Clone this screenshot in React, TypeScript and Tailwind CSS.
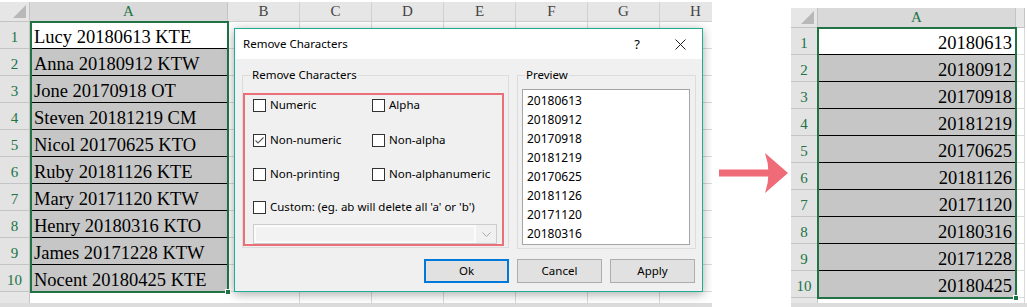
import React from 'react';

const sourceRows = [
    'Lucy 20180613 KTE',
    'Anna 20180912 KTW',
    'Jone 20170918 OT',
    'Steven 20181219 CM',
    'Nicol 20170625 KTO',
    'Ruby 20181126 KTE',
    'Mary 20171120 KTW',
    'Henry 20180316 KTO',
    'James 20171228 KTW',
    'Nocent 20180425 KTE',
];
const results = sourceRows.map(r => r.split(' ')[1]);
const otherCols = ['B', 'C', 'D', 'E', 'F', 'G', 'H'];

const serif = "font-['Liberation_Serif','Times_New_Roman',serif]";

function Corner({ width }: { width: string }) {
    return (
        <div className={`${width} h-[20px] shrink-0 bg-[#e6e6e6] border-r border-b border-[#c4c4c4] flex items-end justify-end pr-[3px] pb-[3px]`}>
            <svg width="13" height="13" viewBox="0 0 13 13">
                <polygon points="13,0 13,13 0,13" fill="#b8b8b8" />
            </svg>
        </div>
    );
}

function Check({ label, checked }: { label: string; checked?: boolean }) {
    return (
        <div className="flex items-center h-[20px] whitespace-nowrap">
            <span className="w-[13px] h-[13px] shrink-0 border border-[#333333] bg-white flex items-center justify-center">
                {checked && (
                    <svg width="11" height="11" viewBox="0 0 11 11">
                        <path d="M1.5 5.5 L4 8 L9.5 2.5" fill="none" stroke="#5a5a5a" strokeWidth="1.1" />
                    </svg>
                )}
            </span>
            <span className="ml-[4px]">{label}</span>
        </div>
    );
}

function RemoveDialog() {
    return (
        <div className="absolute left-[234px] top-[28px] w-[469px] h-[264px] border border-[#1fae94] bg-[#f0f0f0] shadow-[0_2px_10px_rgba(0,0,0,0.35)] font-['Noto_Sans',sans-serif] text-[11.5px] leading-[16px] text-black flex flex-col">
            {/* Title bar */}
            <div className="h-[30px] bg-white flex items-center pl-[8px]">
                <span>Remove Characters</span>
                <span className="ml-auto text-[13px]">?</span>
                <svg className="ml-[35px] mr-[16px]" width="11" height="11" viewBox="0 0 11 11">
                    <path d="M0.5 0.5 L10.5 10.5 M10.5 0.5 L0.5 10.5" stroke="#222" strokeWidth="1" />
                </svg>
            </div>

            <div className="pl-[7px] pr-[6px] pt-[8px]">
                <div className="flex items-start gap-[8px]">
                    {/* Remove Characters group */}
                    <fieldset className="w-[267px] border border-[#dcdcdc] pb-[1px]">
                        <legend className="ml-[8px] px-[1px] leading-[16px]">Remove Characters</legend>
                        <div className="mt-[10px] mr-[4px] border-2 border-[#e96f79] pl-[8px] pr-[5px]">
                            <div className="flex">
                                <div className="w-[119px]"><Check label="Numeric" /></div>
                                <Check label="Alpha" />
                            </div>
                            <div className="flex mt-[15px]">
                                <div className="w-[119px]"><Check label="Non-numeric" checked /></div>
                                <Check label="Non-alpha" />
                            </div>
                            <div className="flex mt-[14px]">
                                <div className="w-[119px]"><Check label="Non-printing" /></div>
                                <Check label="Non-alphanumeric" />
                            </div>
                            <div className="mt-[13px]">
                                <Check label="Custom: (eg. ab will delete all 'a' or 'b')" />
                            </div>
                            <div className="mt-[7px] h-[20px] border border-[#cccccc] flex bg-[#f0f0f0]">
                                <div className="flex-1 border-2 border-[#fbfbfb] bg-[#f2f2f2]" />
                                <div className="w-[20px] flex items-center justify-center">
                                    <svg width="9" height="5" viewBox="0 0 9 5">
                                        <path d="M0.5 0.5 L4.5 4.5 L8.5 0.5" fill="none" stroke="#a8a8a8" strokeWidth="1" />
                                    </svg>
                                </div>
                            </div>
                        </div>
                    </fieldset>

                    {/* Preview group */}
                    <fieldset className="w-[179px] border border-[#dcdcdc] pb-[3px]">
                        <legend className="ml-[7px] px-[1px] leading-[16px]">Preview</legend>
                        <div className="mt-[6px] ml-[4px] mr-[5px] h-[156px] border border-[#a5a5a5] bg-white pl-[4px] pt-[1px] text-[12px] leading-[19px] overflow-hidden">
                            {results.slice(0, 8).map(v => (
                                <div key={v}>{v}</div>
                            ))}
                        </div>
                    </fieldset>
                </div>

                <div className="flex justify-end gap-[8px] mt-[10px] pr-[1px]">
                    <button className="w-[85px] h-[24px] border-2 border-[#0078d7] bg-[#e1e1e1]">Ok</button>
                    <button className="w-[85px] h-[24px] border border-[#adadad] bg-[#e1e1e1]">Cancel</button>
                    <button className="w-[85px] h-[24px] border border-[#adadad] bg-[#e1e1e1]">Apply</button>
                </div>
            </div>
        </div>
    );
}

function LeftSheet() {
    return (
        <div className={`relative w-[712px] h-[307px] shrink-0 overflow-hidden bg-white ${serif}`}>
            <div className="h-[2px]" />
            {/* Column headers */}
            <div className="flex">
                <Corner width="w-[30px]" />
                <div className="w-[198px] h-[20px] shrink-0 bg-[#d9d9d9] border-r border-b border-[#c4c4c4] flex items-center justify-center text-[15px] text-[#217346]">A</div>
                {otherCols.map(c => (
                    <div key={c} className="w-[72px] h-[20px] shrink-0 bg-[#e6e6e6] border-r border-b border-[#d0d0d0] flex items-center justify-center text-[15px] text-[#444]">{c}</div>
                ))}
            </div>
            {/* Rows */}
            {sourceRows.map((text, i) => (
                <div key={text} className="flex h-[27px]">
                    <div className="w-[30px] shrink-0 bg-[#e3e3e3] border-r border-b border-[#c4c4c4] flex items-end justify-center pb-[3px] text-[15px] leading-none text-[#217346]">{i + 1}</div>
                    <div className={`w-[198px] shrink-0 border-b border-black flex items-end pl-[4px] pb-[2px] text-[18.5px] leading-none whitespace-nowrap ${i === 0 ? 'bg-white' : 'bg-[#c6c6c6]'}`}>{text}</div>
                    {otherCols.map(c => (
                        <div key={c} className="w-[72px] shrink-0 border-r border-b border-[#d9d9d9]" />
                    ))}
                </div>
            ))}
            <div className="flex h-[11px] overflow-hidden">
                <div className="w-[30px] shrink-0 bg-[#e6e6e6] border-r border-[#c4c4c4]" />
                <div className="w-[198px] shrink-0" />
                {otherCols.map(c => (
                    <div key={c} className="w-[72px] shrink-0 border-r border-[#d9d9d9]" />
                ))}
            </div>
            <div className="h-[4px] bg-[#dcdcdc]" />

            {/* Selection */}
            <div className="absolute left-[30px] top-[21px] w-[199px] h-[272px] border-2 border-[#217346]" />
            <div className="absolute left-[225px] top-[289px] w-[6px] h-[6px] bg-[#217346] border border-white" />

            <RemoveDialog />
        </div>
    );
}

function RightSheet() {
    return (
        <div className={`relative w-[236px] h-[307px] shrink-0 overflow-hidden bg-white pt-[8px] ${serif}`}>
            <div className="flex">
                <Corner width="w-[27px]" />
                <div className="w-[198px] h-[20px] shrink-0 bg-[#d9d9d9] border-r border-b border-[#c4c4c4] flex items-center justify-center text-[15px] text-[#217346]">A</div>
                <div className="w-[9px] h-[20px] shrink-0 border-b border-r border-[#c4c4c4] bg-[#e6e6e6]" />
            </div>
            {results.map((v, i) => (
                <div key={v} className="flex h-[27px]">
                    <div className="w-[27px] shrink-0 bg-[#e3e3e3] border-r border-b border-[#c4c4c4] flex items-end justify-center pb-[3px] text-[15px] leading-none text-[#217346]">{i + 1}</div>
                    <div className={`w-[198px] shrink-0 border-b border-black flex items-end justify-end pr-[4px] pb-[2px] text-[18.5px] leading-none ${i === 0 ? 'bg-white' : 'bg-[#c6c6c6]'}`}>{v}</div>
                    <div className="w-[9px] shrink-0 border-r border-b border-[#d9d9d9]" />
                </div>
            ))}
            <div className="flex h-[5px] overflow-hidden">
                <div className="w-[27px] shrink-0 bg-[#e6e6e6] border-r border-[#c4c4c4]" />
                <div className="w-[198px] shrink-0" />
                <div className="w-[9px] shrink-0 border-r border-[#d9d9d9]" />
            </div>
            <div className="h-[4px] bg-[#dcdcdc]" />

            <div className="absolute left-[26px] top-[27px] w-[200px] h-[272px] border-2 border-[#217346]" />
            <div className="absolute left-[222px] top-[295px] w-[6px] h-[6px] bg-[#217346] border border-white" />
        </div>
    );
}

export default function App() {
    return (
        <div className="w-[1027px] h-[307px] flex bg-white overflow-hidden">
            <LeftSheet />
            <div className="w-[79px] shrink-0 pl-[7px] pt-[152px]">
                <svg width="70" height="42" viewBox="0 0 70 42">
                    <path d="M0 17.5 H52 V24.5 H0 Z" fill="#ee6b77" />
                    <path d="M46 1 L69 21 L46 41 Q53 21 46 1 Z" fill="#ee6b77" />
                </svg>
            </div>
            <RightSheet />
        </div>
    );
}
